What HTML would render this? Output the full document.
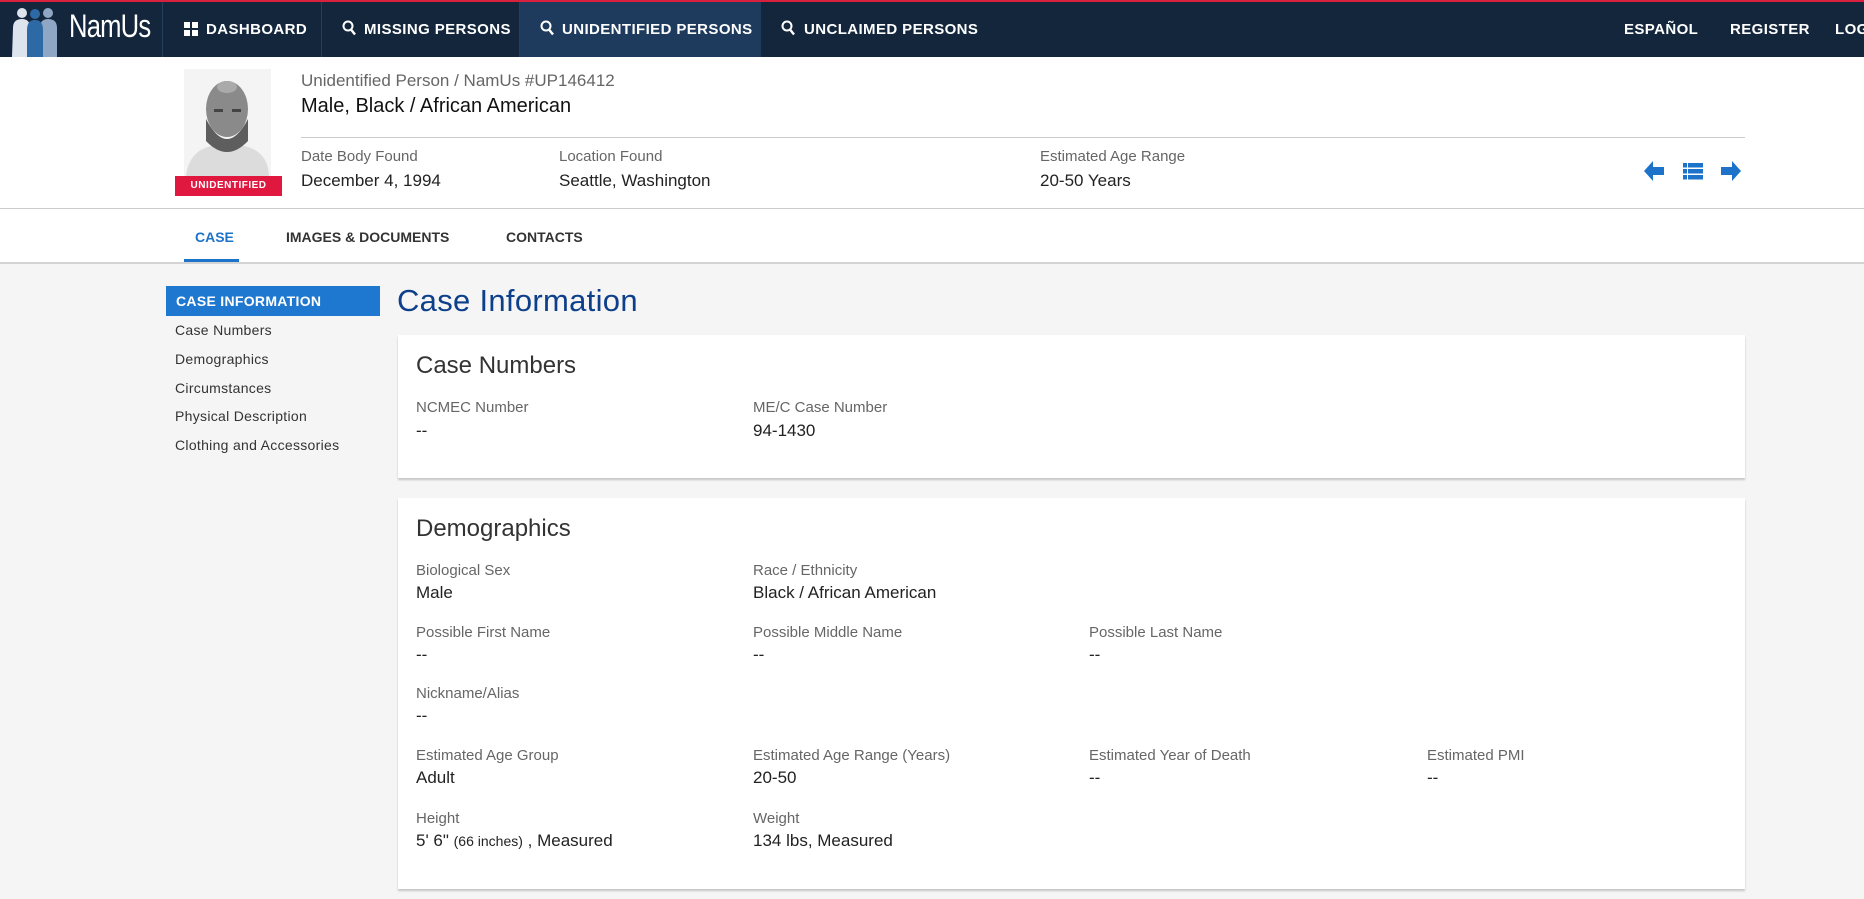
<!DOCTYPE html>
<html><head><meta charset="utf-8">
<style>
*{box-sizing:border-box;margin:0;padding:0}
body{width:1864px;height:899px;overflow:hidden;background:#f5f5f5;font-family:"Liberation Sans",sans-serif;color:#222;position:relative}
.abs{position:absolute;white-space:nowrap}
#top{position:absolute;left:0;top:0;width:1864px;height:57px;background:#13263b;border-top:2px solid #d9203f}
.nav{position:absolute;top:0;height:55px;border-left:1px solid #24405e}
.nt{position:absolute;top:0;line-height:55px;color:#fff;font-weight:bold;font-size:15px;letter-spacing:.4px;white-space:nowrap}
#white{position:absolute;left:0;top:57px;width:1864px;height:207px;background:#fff;border-bottom:2px solid #d4d4d4}
.lab{font-size:15px;color:#666}
.val{font-size:17px;color:#222}
.card{position:absolute;left:398px;width:1347px;background:#fff;box-shadow:0 2px 2px rgba(0,0,0,.2)}
.card h2{position:absolute;left:18px;font-weight:normal;font-size:24px;color:#333}
.side{position:absolute;left:175px;font-size:14px;color:#333;letter-spacing:.3px}
</style></head><body>
<div id="top">
 <svg class="abs" style="left:8px;top:2px" width="50" height="53" viewBox="0 0 50 53">
  <circle cx="14" cy="9" r="5" fill="#dde4ee"/><path d="M5 24q0-9 9-9q8 0 8 9v29H4z" fill="#dde4ee"/>
  <circle cx="40" cy="9" r="5" fill="#8fa6c4"/><path d="M32 24q0-9 8-9q9 0 9 9v29H32z" fill="#8fa6c4"/>
  <circle cx="27" cy="10" r="5" fill="#2d6aa5"/><path d="M19 26q0-10 8-10q8 0 8 10v27H19z" fill="#2d6aa5"/>
 </svg>
 <div class="abs" style="left:69px;top:6px;color:#fff;font-size:32px;letter-spacing:-1px;transform:scaleX(.8);transform-origin:left">NamUs</div>
 <div class="nav" style="left:162px;width:159px"></div>
 <div class="nav" style="left:321px;width:198px"></div>
 <div class="nav" style="left:519px;width:242px;background:#1e3b5d"></div>
 <div class="nav" style="left:761px;width:220px;border-left:none"></div>
 <div class="abs" style="left:184px;top:20px;width:14px;height:14px;background:linear-gradient(#13263b,#13263b) 6px 0/2px 14px no-repeat,linear-gradient(#13263b,#13263b) 0 6px/14px 2px no-repeat,#fff"></div>
 <div class="nt" style="left:206px">DASHBOARD</div>
 <div class="nt" style="left:364px">MISSING PERSONS</div>
 <div class="nt" style="left:562px">UNIDENTIFIED PERSONS</div>
 <div class="nt" style="left:804px">UNCLAIMED PERSONS</div>
 <div class="nt" style="left:1624px">ESPAÑOL</div>
 <div class="nt" style="left:1730px">REGISTER</div>
 <div class="nt" style="left:1835px">LOGIN</div>
</div>
<svg class="abs" style="left:342px;top:20px" width="15" height="16" viewBox="0 0 15 16"><circle cx="6" cy="6" r="4.5" fill="none" stroke="#fff" stroke-width="2"/><path d="M9 9.5l4 5" stroke="#fff" stroke-width="2.4"/></svg>
<svg class="abs" style="left:540px;top:20px" width="15" height="16" viewBox="0 0 15 16"><circle cx="6" cy="6" r="4.5" fill="none" stroke="#fff" stroke-width="2"/><path d="M9 9.5l4 5" stroke="#fff" stroke-width="2.4"/></svg>
<svg class="abs" style="left:781px;top:20px" width="15" height="16" viewBox="0 0 15 16"><circle cx="6" cy="6" r="4.5" fill="none" stroke="#fff" stroke-width="2"/><path d="M9 9.5l4 5" stroke="#fff" stroke-width="2.4"/></svg>

<div id="white"></div>
<svg class="abs" style="left:184px;top:69px" width="87" height="107" viewBox="0 0 87 107">
 <rect width="87" height="107" fill="#f4f4f4"/>
 <path d="M2 107q3-25 25-30h33q24 5 25 30z" fill="#dcdcdc"/>
 <ellipse cx="43" cy="40" rx="21" ry="28" fill="#8a8a8a"/>
 <path d="M22 50q21 40 42 0v22q-21 22-42 0z" fill="#5e5e5e"/>
 <ellipse cx="43" cy="18" rx="10" ry="6" fill="#aaa"/>
 <rect x="30" y="40" width="9" height="3" fill="#444"/><rect x="48" y="40" width="9" height="3" fill="#444"/>
</svg>
<div class="abs" style="left:175px;top:176px;width:107px;height:20px;background:#e0173f;color:#fff;font-size:10px;font-weight:bold;text-align:center;line-height:20px;letter-spacing:.5px">UNIDENTIFIED</div>
<div class="abs" style="left:301px;top:71px;font-size:17px;color:#666">Unidentified Person / NamUs #UP146412</div>
<div class="abs" style="left:301px;top:95px;font-size:20px;color:#111">Male, Black / African American</div>
<div class="abs" style="left:301px;top:137px;width:1444px;height:1px;background:#ccc"></div>
<div class="abs lab" style="left:301px;top:148px">Date Body Found</div>
<div class="abs val" style="left:301px;top:171px">December 4, 1994</div>
<div class="abs lab" style="left:559px;top:148px">Location Found</div>
<div class="abs val" style="left:559px;top:171px">Seattle, Washington</div>
<div class="abs lab" style="left:1040px;top:148px">Estimated Age Range</div>
<div class="abs val" style="left:1040px;top:171px">20-50 Years</div>
<svg class="abs" style="left:1643px;top:160px" width="22" height="22" viewBox="0 0 22 22"><path d="M1 11L10 1v6h11v8H10v6z" fill="#1d73c9"/></svg>
<svg class="abs" style="left:1683px;top:163px" width="20" height="17" viewBox="0 0 20 17"><g fill="#1d73c9"><rect x="0" y="0" width="20" height="4.5"/><rect x="0" y="6" width="20" height="4.5"/><rect x="0" y="12" width="20" height="4.5"/></g><rect x="4" y="0" width="1" height="17" fill="#fff"/></svg>
<svg class="abs" style="left:1720px;top:160px" width="22" height="22" viewBox="0 0 22 22"><path d="M21 11L12 1v6H1v8h11v6z" fill="#1d73c9"/></svg>
<div class="abs" style="left:0;top:208px;width:1864px;height:1px;background:#ccc"></div>
<div class="abs" style="left:195px;top:229px;font-size:14px;font-weight:bold;color:#1d73c9">CASE</div>
<div class="abs" style="left:184px;top:259px;width:55px;height:3px;background:#1d73c9"></div>
<div class="abs" style="left:286px;top:229px;font-size:14px;font-weight:bold;color:#333">IMAGES &amp; DOCUMENTS</div>
<div class="abs" style="left:506px;top:229px;font-size:14px;font-weight:bold;color:#333">CONTACTS</div>

<div class="abs" style="left:166px;top:286px;width:214px;height:30px;background:#1e78d0;color:#fff;font-weight:bold;font-size:14px;line-height:30px;padding-left:10px;letter-spacing:.3px">CASE INFORMATION</div>
<div class="side" style="top:322px">Case Numbers</div>
<div class="side" style="top:351px">Demographics</div>
<div class="side" style="top:380px">Circumstances</div>
<div class="side" style="top:408px">Physical Description</div>
<div class="side" style="top:437px">Clothing and Accessories</div>
<div class="abs" style="left:397px;top:283px;font-size:31px;color:#0d3f8a;letter-spacing:.3px">Case Information</div>

<div class="card" style="top:335px;height:143px">
 <h2 style="top:17px">Case Numbers</h2>
 <div class="abs lab" style="left:18px;top:64px">NCMEC Number</div>
 <div class="abs val" style="left:18px;top:86px">--</div>
 <div class="abs lab" style="left:355px;top:64px">ME/C Case Number</div>
 <div class="abs val" style="left:355px;top:86px">94-1430</div>
</div>

<div class="card" style="top:498px;height:391px">
 <h2 style="top:17px">Demographics</h2>
 <div class="abs lab" style="left:18px;top:64px">Biological Sex</div><div class="abs val" style="left:18px;top:85px">Male</div>
 <div class="abs lab" style="left:355px;top:64px">Race / Ethnicity</div><div class="abs val" style="left:355px;top:85px">Black / African American</div>

 <div class="abs lab" style="left:18px;top:126px">Possible First Name</div><div class="abs val" style="left:18px;top:147px">--</div>
 <div class="abs lab" style="left:355px;top:126px">Possible Middle Name</div><div class="abs val" style="left:355px;top:147px">--</div>
 <div class="abs lab" style="left:691px;top:126px">Possible Last Name</div><div class="abs val" style="left:691px;top:147px">--</div>

 <div class="abs lab" style="left:18px;top:187px">Nickname/Alias</div><div class="abs val" style="left:18px;top:208px">--</div>

 <div class="abs lab" style="left:18px;top:249px">Estimated Age Group</div><div class="abs val" style="left:18px;top:270px">Adult</div>
 <div class="abs lab" style="left:355px;top:249px">Estimated Age Range (Years)</div><div class="abs val" style="left:355px;top:270px">20-50</div>
 <div class="abs lab" style="left:691px;top:249px">Estimated Year of Death</div><div class="abs val" style="left:691px;top:270px">--</div>
 <div class="abs lab" style="left:1029px;top:249px">Estimated PMI</div><div class="abs val" style="left:1029px;top:270px">--</div>

 <div class="abs lab" style="left:18px;top:312px">Height</div><div class="abs val" style="left:18px;top:333px">5' 6" <span style="font-size:14px">(66 inches)</span> , Measured</div>
 <div class="abs lab" style="left:355px;top:312px">Weight</div><div class="abs val" style="left:355px;top:333px">134 lbs, Measured</div>
</div>
</body></html>
